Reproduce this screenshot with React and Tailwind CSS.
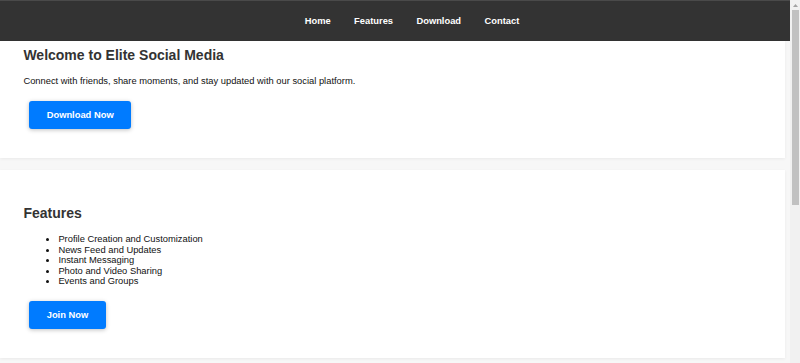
import React from 'react';

const font = { fontFamily: '"Liberation Sans", Arial, sans-serif' };

const features = [
  'Profile Creation and Customization',
  'News Feed and Updates',
  'Instant Messaging',
  'Photo and Video Sharing',
  'Events and Groups',
];

function Header() {
  return (
    <header className="h-[41px] bg-[#333] border-t border-[#4a4a4a] flex items-center justify-center">
      <nav>
        <ul className="flex gap-[23.4px] pl-[34px] text-[9.35px] font-bold text-white">
          <li>Home</li>
          <li>Features</li>
          <li>Download</li>
          <li>Contact</li>
        </ul>
      </nav>
    </header>
  );
}

function Button({ children }) {
  return (
    <button className="ml-[5.8px] h-[28px] px-[17.5px] rounded-[3px] bg-[#007bff] text-white text-[9.35px] font-bold shadow-[0_1px_4px_rgba(0,0,0,0.25)]">
      {children}
    </button>
  );
}

function Scrollbar() {
  return (
    <div className="w-[10px] bg-[#f1f1f1] flex flex-col items-center">
      <div className="h-[10px] flex items-center justify-center">
        <svg width="5" height="3" viewBox="0 0 5 3">
          <path d="M0 3 L2.5 0 L5 3 Z" fill="#a3a3a3" />
        </svg>
      </div>
      <div className="w-[7px] h-[195px] bg-[#c1c1c1]" />
    </div>
  );
}

export default function App() {
  return (
    <div className="flex h-[363px] overflow-hidden bg-[#f7f7f7]" style={font}>
      <div className="flex-1 flex flex-col">
        <Header />
        <section className="mr-[5px] bg-white h-[117px] px-[23.4px] pt-[5px] shadow-[0_1px_3px_rgba(0,0,0,0.06)] text-[#333]">
          <h2 className="text-[14px] font-bold leading-[18px]">Welcome to Elite Social Media</h2>
          <p className="mt-[12px] text-[9.35px] text-[#111] leading-[11px]">
            Connect with friends, share moments, and stay updated with our social platform.
          </p>
          <div className="mt-[14px]">
            <Button>Download Now</Button>
          </div>
        </section>
        <section className="mr-[5px] mt-[12px] bg-white h-[188px] px-[23.4px] pt-[34px] shadow-[0_1px_3px_rgba(0,0,0,0.06)] text-[#333]">
          <h2 className="text-[14px] font-bold leading-[18px]">Features</h2>
          <ul className="mt-[12px] list-disc pl-[35px] text-[9.35px] leading-[10.5px] text-[#111]">
            {features.map((f) => (
              <li key={f}>{f}</li>
            ))}
          </ul>
          <div className="mt-[14px]">
            <Button>Join Now</Button>
          </div>
        </section>
      </div>
      <Scrollbar />
    </div>
  );
}
